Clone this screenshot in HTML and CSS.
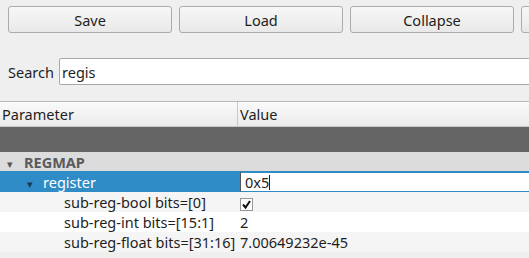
FILE: index.html
```html
<!DOCTYPE html>
<html lang="en">
<head>
    <meta charset="UTF-8">
    <title>Register Map</title>
    <link rel="stylesheet" href="styles.css">
</head>
<body>
    <div class="toolbar">
        <button>Save</button>
        <button>Load</button>
        <button>Collapse</button>
        <button></button>
    </div>

    <div class="search">
        <label>Search</label>
        <input type="text" value="regis">
    </div>

    <div class="tree">
        <div class="row header">
            <div class="col-name">Parameter</div>
            <div class="col-value">Value</div>
        </div>
        <div class="row dark"></div>
        <div class="row group">
            <div class="col-name"><span class="arrow">&#9662;</span>REGMAP</div>
            <div class="col-value"></div>
        </div>
        <div class="row selected">
            <div class="col-name lvl1"><span class="arrow">&#9662;</span>register</div>
            <div class="col-value"><div class="editor">0x5<span class="caret"></span></div></div>
        </div>
        <div class="row alt">
            <div class="col-name lvl2">sub-reg-bool bits=[0]</div>
            <div class="col-value">
                <span class="check">
                    <svg width="11" height="11" viewBox="0 0 11 11"><path d="M2 5.5 L4.5 8.5 L9 2" fill="none" stroke="#111" stroke-width="2"/></svg>
                </span>
            </div>
        </div>
        <div class="row">
            <div class="col-name lvl2">sub-reg-int bits=[15:1]</div>
            <div class="col-value">2</div>
        </div>
        <div class="row alt">
            <div class="col-name lvl2">sub-reg-float bits=[31:16]</div>
            <div class="col-value">7.00649232e-45</div>
        </div>
    </div>
</body>
</html>
```

FILE: styles.css
```css
body {
    margin: 0;
    background: #efefef;
    font-family: "Noto Sans", "DejaVu Sans", sans-serif;
    font-size: 14.5px;
    color: #1e1e1e;
    overflow: hidden;
    width: 529px;
    height: 258px;
}
.toolbar {
    display: flex;
    gap: 7px;
    padding: 6px 0 0 8px;
}
.toolbar button {
    flex-shrink: 0;
    width: 164px;
    height: 27px;
    border: 1px solid #ababab;
    border-radius: 3px;
    background: linear-gradient(#f7f7f7, #e9e9e9);
    font-family: inherit;
    font-size: 14.5px;
    color: #1e1e1e;
    padding: 0;
}
.search {
    display: flex;
    align-items: center;
    margin-top: 25px;
}
.search label {
    flex-shrink: 0;
    width: 59px;
    padding-left: 8px;
    box-sizing: border-box;
}
.search input {
    flex-shrink: 0;
    width: 480px;
    height: 27px;
    box-sizing: border-box;
    border: 1px solid #a8a8a8;
    border-radius: 2px;
    background: white;
    font-family: inherit;
    font-size: 14.5px;
    color: #1e1e1e;
    padding: 0 2px;
    outline: none;
}
.tree {
    margin-top: 16px;
    background: white;
}
.row {
    display: flex;
    height: 20px;
    align-items: center;
    white-space: nowrap;
}
.col-name {
    width: 238px;
    flex-shrink: 0;
    box-sizing: border-box;
    padding-left: 2px;
}
.col-value {
    flex: 1;
    padding-left: 2px;
}
.header {
    height: 24px;
    border-top: 1px solid #b8b8b8;
    border-bottom: 1px solid #c8c8c8;
    background: linear-gradient(#fafafa, #ebebeb);
}
.header .col-name {
    border-right: 1px solid #c8c8c8;
    height: 100%;
    display: flex;
    align-items: center;
}
.dark {
    height: 25px;
    background: #656565;
}
.group {
    height: 19px;
    background: #dcdcdc;
    color: #5a5a5a;
    font-weight: bold;
}
.arrow {
    display: inline-block;
    font-size: 11px;
    font-weight: normal;
}
.group .col-name {
    padding-left: 7px;
}
.group .arrow {
    width: 17px;
    color: #555;
}
.selected {
    height: 21px;
    background: #308cc6;
    color: white;
}
.lvl1 {
    padding-left: 27px;
}
.lvl1 .arrow {
    width: 16px;
    color: #143c5a;
}
.lvl2 {
    padding-left: 64px;
}
.selected .col-value {
    padding-left: 2px;
    align-self: stretch;
    display: flex;
}
.editor {
    flex: 1;
    color: #1e1e1e;
    background: white;
    padding-left: 4px;
    border-left: 1px solid #555;
    border-top: 2px solid #308cc6;
    border-bottom: 1px solid #308cc6;
    display: flex;
    align-items: center;
}
.caret {
    display: inline-block;
    width: 1px;
    height: 15px;
    background: #1e1e1e;
}
.alt {
    background: #f5f5f5;
}
.check {
    display: inline-flex;
    align-items: center;
    justify-content: center;
    width: 11px;
    height: 11px;
    border: 1px solid #999;
    background: white;
    vertical-align: middle;
}
```
